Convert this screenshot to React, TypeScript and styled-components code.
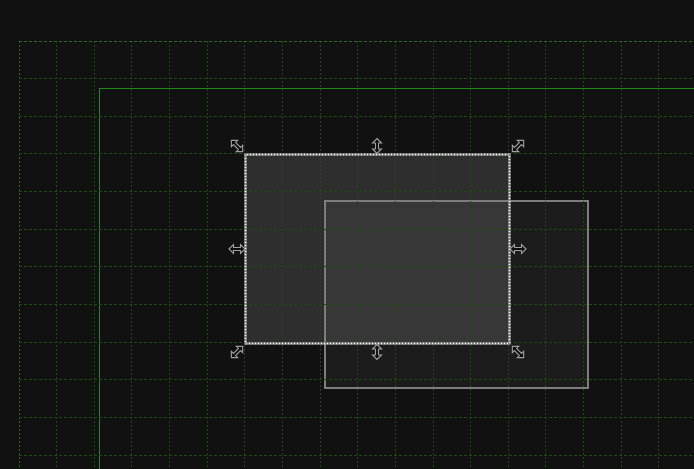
import React from "react";
import styled, { createGlobalStyle } from "styled-components";

const GlobalStyle = createGlobalStyle`
  html, body {
    margin: 0;
    padding: 0;
    background: #111111;
    font-family: "DejaVu Sans", sans-serif;
  }
`;

const Canvas = styled.main`
  position: relative;
  width: 694px;
  height: 469px;
  background: #111111;
  overflow: hidden;
`;

const PageBorder = styled.div`
  position: absolute;
  left: 99px;
  top: 88px;
  right: -10px;
  bottom: -10px;
  border-top: 1px solid #1f8a10;
  border-left: 1px solid #1f8a10;
`;

const Shape = styled.div<{ $x: number; $y: number; $w: number; $h: number; $fill: string; $stroke?: string }>`
  position: absolute;
  box-sizing: border-box;
  left: ${(p) => p.$x}px;
  top: ${(p) => p.$y}px;
  width: ${(p) => p.$w}px;
  height: ${(p) => p.$h}px;
  background: ${(p) => p.$fill};
  border: ${(p) => (p.$stroke ? `2px solid ${p.$stroke}` : "none")};
`;

const GridLayer = styled.svg`
  position: absolute;
  left: 0;
  top: 0;
  width: 694px;
  height: 469px;
  pointer-events: none;
`;

const Selection = styled.div`
  position: absolute;
  left: 245px;
  top: 154px;
  width: 264px;
  height: 189px;
`;

const Cue = styled.svg`
  position: absolute;
  left: -1px;
  top: -1px;
  width: 266px;
  height: 191px;
  overflow: visible;
`;

/* 3x3 ring of scale handles around the selection */
const HandleRing = styled.div`
  position: absolute;
  inset: -17px;
  display: grid;
  grid-template-columns: 17px 1fr 17px;
  grid-template-rows: 17px 1fr 17px;
  place-items: center;
`;

const Handle = styled.svg`
  width: 18px;
  height: 18px;
`;

const Blank = styled.div``;

const STEP = 37.64;
const snap = (v: number) => Math.floor(v) + 0.5;

const Grid = () => {
  const xs: number[] = [];
  const ys: number[] = [];
  for (let x = 19; x < 700; x += STEP) xs.push(snap(x));
  for (let y = 41; y < 480; y += STEP) ys.push(snap(y));
  return (
    <GridLayer viewBox="0 0 694 469">
      {xs.map((x, i) => (
        <line key={"x" + i} x1={x} y1={41} x2={x} y2={469}
          stroke={i === 0 ? "#2c6a1f" : "#1b4a13"} strokeWidth={1} strokeDasharray="2 2" />
      ))}
      {ys.map((y, i) => (
        <line key={"y" + i} x1={19} y1={y} x2={694} y2={y}
          stroke={i === 0 ? "#2c6a1f" : "#1b4a13"} strokeWidth={1} strokeDasharray="3 2" />
      ))}
    </GridLayer>
  );
};

// double-headed arrow, horizontal, rotated per handle
const Arrow = ({ angle, len = 14 }: { angle: number; len?: number }) => {
  const h = len / 2;
  const d = `M${-h} 0 L${-h + 4.5} -4.5 L${-h + 4.5} -1.5 L${h - 4.5} -1.5 L${h - 4.5} -4.5 L${h} 0 L${h - 4.5} 4.5 L${h - 4.5} 1.5 L${-h + 4.5} 1.5 L${-h + 4.5} 4.5 Z`;
  return (
    <Handle viewBox="-9 -9 18 18">
      <path d={d} transform={`rotate(${angle})`} fill="#0c0c0c" stroke="#a0a0a0" strokeWidth={1.1} strokeLinejoin="miter" />
    </Handle>
  );
};

export default function App() {
  return (
    <>
      <GlobalStyle />
      <Canvas>
        <PageBorder />
        <Shape $x={245} $y={154} $w={264} $h={189} $fill="#2e2e2e" />
        <Shape $x={324} $y={200} $w={265} $h={189} $fill="rgba(255,255,255,0.047)" $stroke="#7d7d7d" />
        <Grid />
        <Selection>
          <Cue viewBox="-1 -1 266 191">
            <rect x={0.5} y={0.5} width={264} height={189} fill="none" stroke="#ffffff" strokeWidth={2} />
            <rect x={0.5} y={0.5} width={264} height={189} fill="none" stroke="#111111" strokeWidth={2} strokeDasharray="1 2" />
          </Cue>
          <HandleRing>
            <Arrow angle={45} len={16} />
            <Arrow angle={90} len={15} />
            <Arrow angle={-45} len={16} />
            <Arrow angle={0} len={16} />
            <Blank />
            <Arrow angle={0} len={16} />
            <Arrow angle={-45} len={16} />
            <Arrow angle={90} len={15} />
            <Arrow angle={45} len={16} />
          </HandleRing>
        </Selection>
      </Canvas>
    </>
  );
}
